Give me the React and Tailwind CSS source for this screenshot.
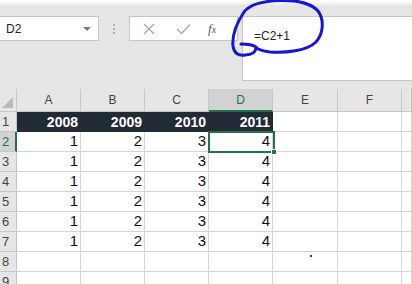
import React from "react";

const cols = ["A", "B", "C", "D", "E", "F", ""];
const rows = [
  ["2008", "2009", "2010", "2011"],
  ["1", "2", "3", "4"],
  ["1", "2", "3", "4"],
  ["1", "2", "3", "4"],
  ["1", "2", "3", "4"],
  ["1", "2", "3", "4"],
  ["1", "2", "3", "4"],
  [],
  [],
];

export default function App() {
  return (
    <div
      className="relative w-[412px] h-[284px] overflow-hidden bg-[#e6e6e6]"
      style={{ fontFamily: '"Liberation Sans", Arial, sans-serif' }}
    >
      <div className="h-[5px] bg-gradient-to-b from-white to-[#ececec]" />
      {/* toolbar */}
      <div className="mt-[11px] flex items-start h-[65px]">
        <div className="ml-[-1px] w-[100px] h-[25px] bg-white border border-[#c6c6c6] flex items-center justify-between pl-[6px] pr-[7px]">
          <span className="text-[12px] text-[#222]">D2</span>
          <span className="w-0 h-0 border-l-[4px] border-r-[4px] border-t-[4px] border-l-transparent border-r-transparent border-t-[#7a7a7a]" />
        </div>
        <div className="w-[30px] h-[25px] flex flex-col items-center justify-center gap-[2px]">
          <span className="w-[2px] h-[2px] bg-[#b0b0b0]" />
          <span className="w-[2px] h-[2px] bg-[#b0b0b0]" />
          <span className="w-[2px] h-[2px] bg-[#b0b0b0]" />
        </div>
        <div className="w-[109px] h-[25px] bg-white border border-[#c6c6c6] flex items-center">
          <svg width="12" height="12" viewBox="0 0 12 12" className="ml-[13px]">
            <path d="M1 1 L11 11 M11 1 L1 11" stroke="#a8a8a8" strokeWidth="1.3" fill="none" />
          </svg>
          <svg width="15" height="12" viewBox="0 0 15 12" className="ml-[21px]">
            <path d="M1 6 L5.5 10.5 L14 1.5" stroke="#a8a8a8" strokeWidth="1.4" fill="none" />
          </svg>
          <span
            className="ml-[17px] text-[13px] italic text-[#555]"
            style={{ fontFamily: '"Liberation Serif", "Times New Roman", serif' }}
          >
            f<span className="text-[10px]">x</span>
          </span>
        </div>
        <div className="ml-[4px] flex-1 h-[65px] bg-white border border-[#c6c6c6] border-r-0 pl-[11px] pt-[6px]">
          <span className="text-[12px] text-[#222]">=C2+1</span>
        </div>
      </div>

      {/* grid */}
      <div className="relative mt-[8px] grid grid-cols-[17px_64px_64px_64px_64px_65px_64px_1fr]">
        {/* header row */}
        <div className="h-[23px] bg-[#e6e6e6] border-r border-b border-[#c6c6c6] relative">
          <svg width="12" height="11" className="absolute left-[2px] top-[8px]">
            <path d="M11 0 L11 11 L0 11 Z" fill="#b9b9b9" />
          </svg>
        </div>
        {cols.map((c, i) =>
          c === "D" ? (
            <div
              key={i}
              className="h-[23px] bg-[#d2d2d2] border-r border-[#c6c6c6] border-b-2 border-b-[#217346] flex items-center justify-center text-[12px] text-[#217346]"
            >
              {c}
            </div>
          ) : (
            <div
              key={i}
              className="h-[23px] bg-[#e6e6e6] border-r border-b border-[#c6c6c6] flex items-center justify-center text-[12px] text-[#444]"
            >
              {c}
            </div>
          )
        )}
        {rows.map((r, ri) => (
          <React.Fragment key={ri}>
            <div
              className={
                ri === 1
                  ? "h-[20px] bg-[#d2d2d2] border-r-2 border-r-[#217346] border-b border-b-[#c6c6c6] flex items-center pl-[2px] text-[13px] text-[#217346]"
                  : "h-[20px] bg-[#e6e6e6] border-r border-b border-[#c6c6c6] flex items-center pl-[2px] text-[13px] text-[#444]"
              }
            >
              {ri + 1}
            </div>
            {cols.map((c, ci) => {
              const v = r[ci];
              if (ri === 0 && ci < 4) {
                return (
                  <div
                    key={ci}
                    className="h-[20px] bg-[#222a35] flex items-center justify-end pr-[3px] text-[14px] font-bold text-white"
                  >
                    {v}
                  </div>
                );
              }
              return (
                <div
                  key={ci}
                  className="h-[20px] bg-white border-r border-b border-[#d4d4d4] flex items-center justify-end pr-[2px] text-[15px] text-[#111]"
                >
                  {v || ""}
                </div>
              );
            })}
          </React.Fragment>
        ))}
        {/* selection */}
        <div className="absolute left-[208px] top-[42px] w-[67px] h-[22px] border-2 border-[#217346] pointer-events-none" />
        <div className="absolute left-[271px] top-[60px] w-[6px] h-[6px] bg-[#217346] border border-white pointer-events-none" />
      </div>

      <div className="absolute left-[310px] top-[255px] w-[2px] h-[2px] bg-[#444]" />

      {/* blue hand-drawn circle */}
      <svg className="absolute left-0 top-0 pointer-events-none" width="412" height="284">
        <path
          d="M241 44 C247 44 253 45 256 47 C256 52 252 55 245 55 C238 56 234 53 233 46 C232 36 236 24 244 12 C250 4 262 1 280 0.5 C298 0 312 4 318 11 C324 19 324 33 316 42 C307 51 285 53 270 52 C262 51 258 50 256 47"
          stroke="#1616d4"
          strokeWidth="3"
          fill="none"
          strokeLinecap="round"
          strokeLinejoin="round"
        />
      </svg>
    </div>
  );
}
